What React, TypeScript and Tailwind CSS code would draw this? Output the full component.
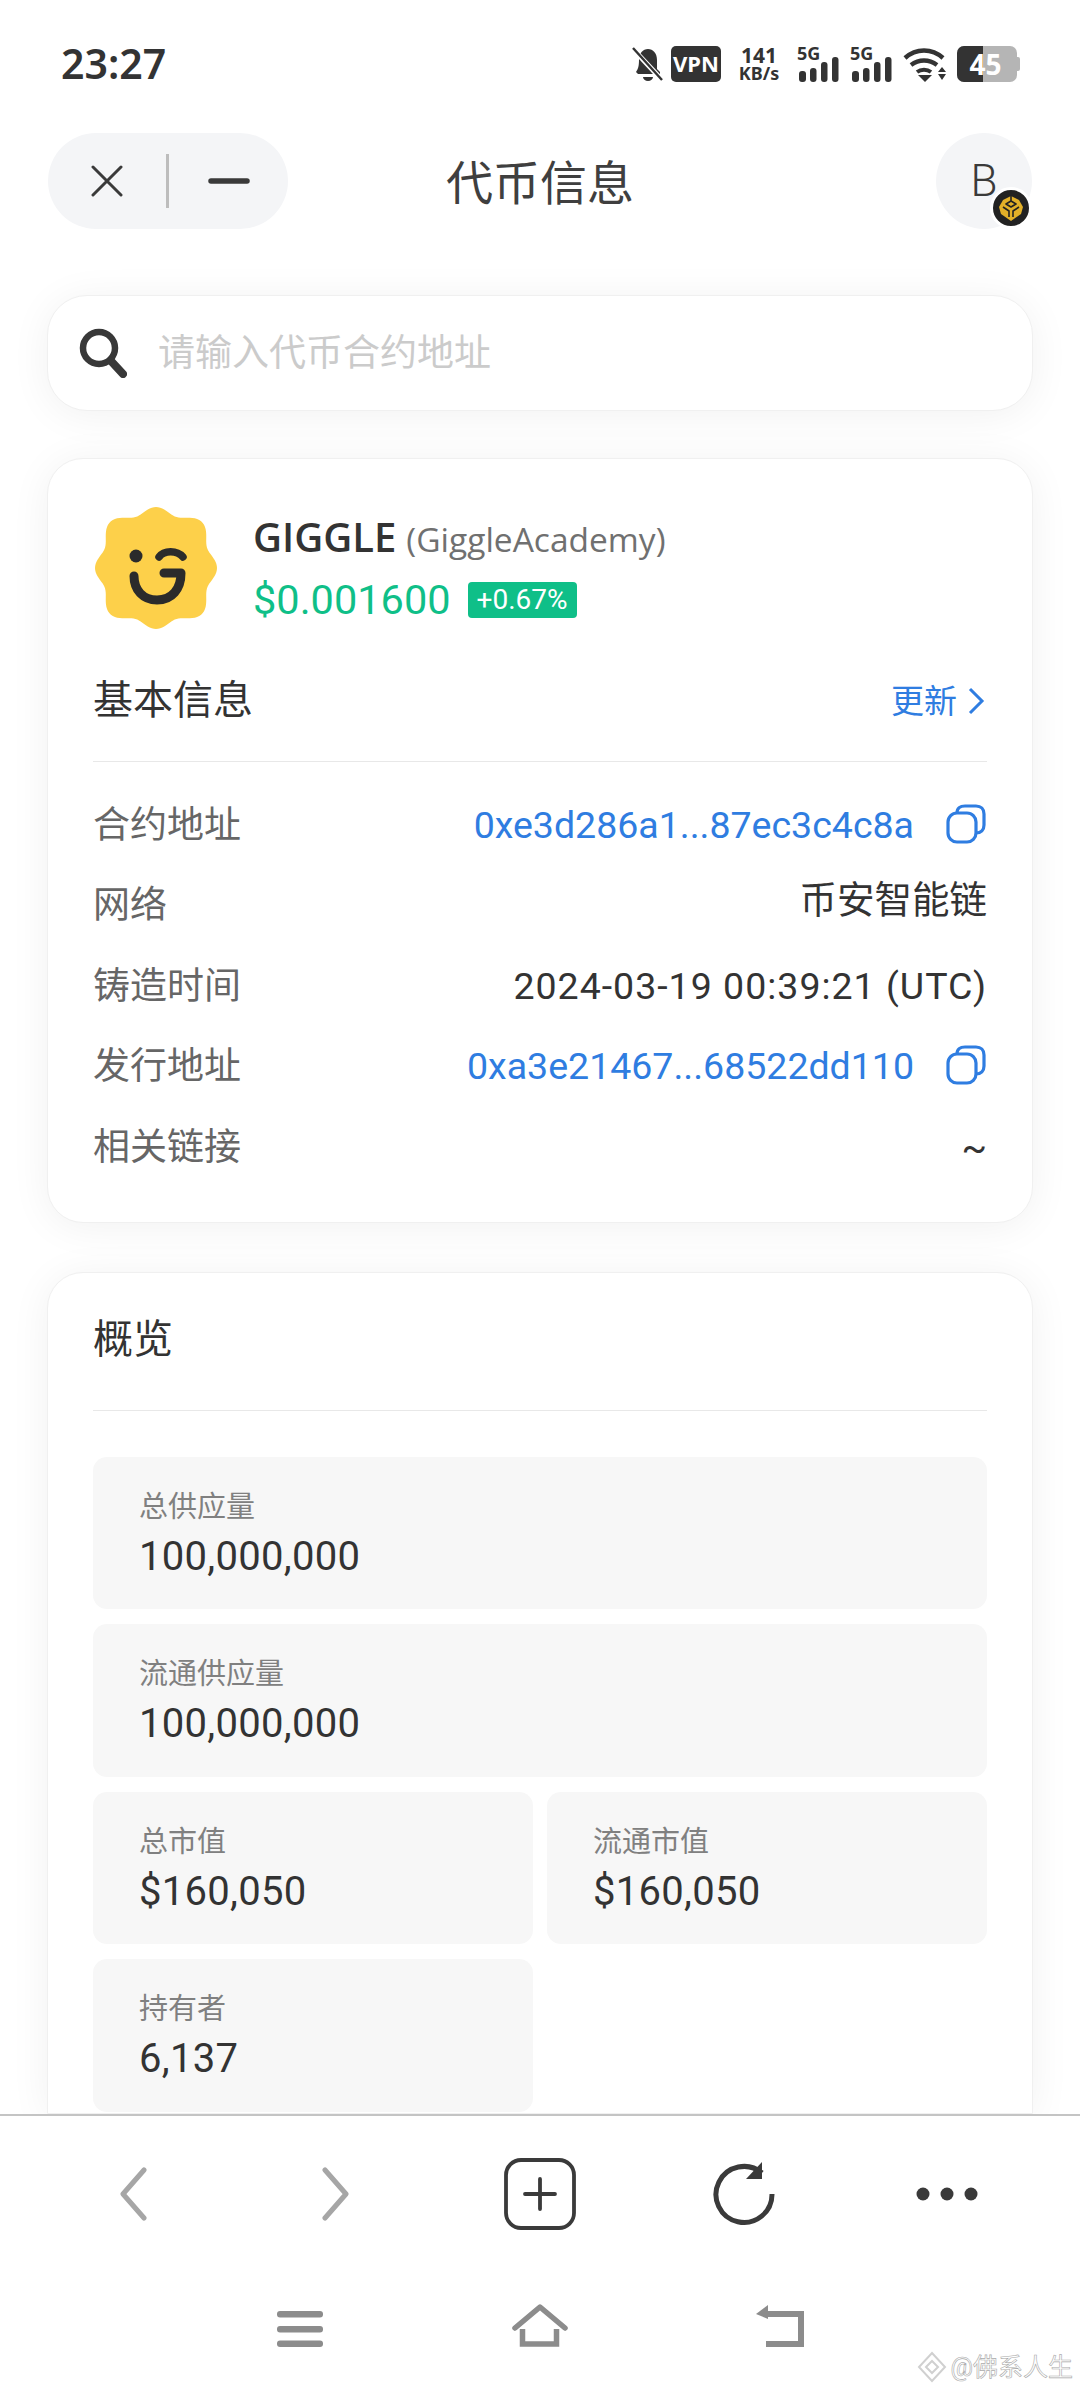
const sans = "font-['Roboto','Noto_Sans_CJK_SC',sans-serif]";
const cardShadow = "shadow-[0_4px_40px_rgba(0,0,0,0.06)]";

// scalloped badge outline of the token logo
const logoPath =
  Array.from({ length: 180 }, (_, i) => {
    const t = (i / 180) * Math.PI * 2;
    const r = 59 + 4 * Math.cos(8 * t) - 2 * Math.cos(4 * t);
    return `${i === 0 ? "M" : "L"}${(61 + r * Math.sin(t)).toFixed(2)} ${(61 - r * Math.cos(t)).toFixed(2)}`;
  }).join(" ") + "z";

function Signal() {
  return (
    <div className="flex h-[36px] w-[42px] flex-col items-start">
      <span className="text-[18px] font-bold leading-[14px] font-['Noto_Sans',sans-serif]">5G</span>
      <svg width="41" height="25" viewBox="0 0 41 25" className="-mt-[3px] ml-[1px]">
        <rect x="1" y="14" width="7" height="11" rx="3" fill="#333" />
        <rect x="12" y="11" width="6.500" height="14" rx="3" fill="#333" />
        <rect x="23" y="5" width="6.500" height="20" rx="3" fill="#333" />
        <rect x="34" y="0" width="6.500" height="25" rx="3" fill="#333" />
      </svg>
    </div>
  );
}

function StatusBar() {
  return (
    <div className="flex h-[128px] items-center justify-between pl-[61px] pr-[60px] pb-[1px]">
      <span className="text-[41px] font-semibold leading-none text-[#333] font-['Noto_Sans',sans-serif]">23:27</span>
      <div className="flex items-center text-[#333]">
        <svg width="32" height="38" viewBox="0 0 32 38" className="mr-[7px]">
          <path d="M4 27c2-3 3-6 3-12 0-7 4-11 9-11s9 4 9 11v9l3 3v2H6z" fill="#333" />
          <path d="M11 32h10a5 4 0 0 1-10 0z" fill="#333" />
          <path d="M1 4l29 31" stroke="#fff" strokeWidth="5" />
          <path d="M1 3l29 32" stroke="#333" strokeWidth="2.4" />
        </svg>
        <span className="mr-[17px] flex h-[36px] w-[50px] items-center justify-center rounded-[5px] bg-[#333] text-[22px] font-bold text-white font-['Noto_Sans',sans-serif]">VPN</span>
        <div className="mr-[17px] flex w-[42px] flex-col items-center font-['Noto_Sans',sans-serif] font-bold">
          <span className="text-[21px] leading-[19px]">141</span>
          <span className="text-[18px] leading-[17px]">KB/s</span>
        </div>
        <Signal />
        <span className="w-[11px]" />
        <Signal />
        <svg width="44" height="36" viewBox="0 0 44 36" className="ml-[11px]">
          <path d="M2 12c11-10 27-10 38 0" fill="none" stroke="#333" strokeWidth="4.4" />
          <path d="M8 19c8-6 18-6 26 0" fill="none" stroke="#333" strokeWidth="4.4" />
          <path d="M14 26c4-3 10-3 14 0" fill="none" stroke="#333" strokeWidth="4" />
          <path d="M15 29h14l-7 7z" fill="#333" />
          <path d="M35 26h8l-4-5zM35 28h8l-4 6z" fill="#333" />
        </svg>
        <div className="relative ml-[10px] flex h-[36px] w-[60px] overflow-hidden rounded-[7px] bg-[#b5b5b5]">
          <div className="h-full w-[26px] bg-[#333]" />
          <span className="absolute inset-0 flex items-center justify-center pr-[3px] text-[28px] font-bold text-white font-['Noto_Sans',sans-serif]">45</span>
        </div>
        <div className="h-[14px] w-[3px] rounded-r-[2px] bg-[#b5b5b5]" />
      </div>
    </div>
  );
}

function TitleBar() {
  return (
    <div className="relative flex h-[96px] items-center justify-between px-[48px]">
      <div className="flex h-[96px] w-[240px] items-center rounded-full bg-[#f4f5f7]">
        <svg width="32" height="32" viewBox="0 0 32 32" className="ml-[43px]">
          <path d="M2 2l28 28M30 2L2 30" stroke="#3a3a3a" strokeWidth="3" strokeLinecap="round" />
        </svg>
        <div className="ml-[43px] h-[54px] w-[3px] bg-[#bdbdbd]" />
        <svg width="42" height="6" viewBox="0 0 42 6" className="ml-[39px]">
          <path d="M3 3h36" stroke="#3a3a3a" strokeWidth="5.500" strokeLinecap="round" />
        </svg>
      </div>
      <span className="pointer-events-none absolute left-0 right-0 pt-[5px] text-center text-[47px] leading-none text-[#3f3f3f]">代币信息</span>
      <div className="relative flex h-[96px] w-[96px] items-center justify-center rounded-full bg-[#f4f5f7]">
        <span className="text-[44px] font-light leading-none text-[#3a3a3a]">B</span>
        <div className="absolute bottom-0 right-0 flex h-[42px] w-[42px] items-center justify-center rounded-full border-[3px] border-white bg-[#222]">
          <svg width="28" height="28" viewBox="0 0 28 28">
            <path d="M14 2l8 4 4 7-2 7-10 7-10-7-2-7 4-7z" fill="#e3b028" />
            <path d="M14 7l5 3-5 3-5-3zM6 13l6 4v6M22 13l-6 4v6M14 2v5" fill="none" stroke="#222" strokeWidth="1.6" strokeLinejoin="round" />
          </svg>
        </div>
      </div>
    </div>
  );
}

function Logo() {
  return (
    <svg width="122" height="122" viewBox="0 0 122 122" className="ml-[2px] shrink-0">
      <path fill="#fdd04a" d={logoPath} />
      <circle cx="41" cy="49" r="6.500" fill="#2b2b2b" />
      <path d="M64 50c5-7 18-7 24 0" fill="none" stroke="#2b2b2b" strokeWidth="7.500" strokeLinecap="round" />
      <path d="M39 69c0 14 9 24 23 24 15 0 24-11 24-27H69" fill="none" stroke="#2b2b2b" strokeWidth="9" strokeLinecap="round" strokeLinejoin="round" />
    </svg>
  );
}

function CopyIcon() {
  return (
    <svg width="40" height="40" viewBox="0 0 40 40" fill="none" stroke="#2f7de1" strokeWidth="3.2" className="ml-[32px] mr-[1px] -mt-[3px]">
      <rect x="2" y="9" width="28" height="29" rx="9" />
      <path d="M11 9c0-5 3-7 8-7h11c5 0 8 3 8 8v11c0 5-3 8-8 8" />
    </svg>
  );
}

function InfoRow({ label, children }: { label: string; children: React.ReactNode }) {
  return (
    <div className="flex h-[80.500px] items-center justify-between">
      <span className="text-[37px] leading-none text-[#666]">{label}</span>
      <div className="flex items-center text-[37.500px] leading-none text-[#333]">{children}</div>
    </div>
  );
}

function Stat({ label, value }: { label: string; value: string }) {
  return (
    <div className="flex h-[152.500px] flex-col rounded-[14px] bg-[#f7f7f7] pl-[46px] pt-[33px]">
      <span className="text-[29px] leading-[34px] text-[#808080]">{label}</span>
      <span className="mt-[11px] text-[40px] leading-[44px] tracking-[0.3px] text-[#333]">{value}</span>
    </div>
  );
}

export default function App() {
  return (
    <div className={`relative flex h-[2392px] w-[1080px] flex-col overflow-hidden bg-white ${sans}`}>
      <StatusBar />
      <div className="mt-[5px]">
        <TitleBar />
      </div>

      <main className="flex min-h-0 flex-1 flex-col overflow-hidden bg-white px-[47px] pt-[66px]">
        <div className={`flex h-[116px] shrink-0 items-center rounded-[40px] border border-[#f0f0f0] bg-white pl-[31px] ${cardShadow}`}>
          <svg width="48" height="50" viewBox="0 0 48 50" fill="none" stroke="#383838">
            <circle cx="20" cy="20" r="16" strokeWidth="6.500" />
            <path d="M32 33l12 13" strokeWidth="8" strokeLinecap="round" />
          </svg>
          <span className="ml-[31px] text-[37px] leading-none text-[#cbcbcb]">请输入代币合约地址</span>
        </div>

        <section className={`mt-[47px] shrink-0 rounded-[36px] border border-[#f0f0f0] bg-white px-[45px] pb-[34px] pt-[48px] ${cardShadow}`}>
          <div className="flex items-start">
            <Logo />
            <div className="ml-[36px] pt-[5px]">
              <div className="flex items-baseline">
                <span className="text-[40px] font-semibold leading-[50px] text-[#333] font-['Open_Sans',sans-serif]">GIGGLE</span>
                <span className="ml-[10px] text-[33.500px] font-medium leading-[50px] text-[#707070] font-['Open_Sans',sans-serif]">(GiggleAcademy)</span>
              </div>
              <div className="mt-[12px] flex items-center">
                <span className="text-[41.500px] leading-[48px] text-[#0fbf88]">$0.001600</span>
                <span className="ml-[17px] flex h-[36px] w-[109px] items-center justify-center rounded-[4px] bg-[#0fbf88] text-[28px] leading-none text-white">+0.67%</span>
              </div>
            </div>
          </div>

          <div className="mt-[23px] flex h-[110px] items-center justify-between border-b border-[#e8e8e8] pb-[11px]">
            <span className="text-[40px] leading-none text-[#333]">基本信息</span>
            <span className="mr-[2px] flex items-center text-[33px] leading-none text-[#2f7de1]">
              更新
              <svg width="18" height="28" viewBox="0 0 18 28" fill="none" stroke="#2f7de1" strokeWidth="3" className="ml-[10px]">
                <path d="M3 2l12 12L3 26" />
              </svg>
            </span>
          </div>

          <div className="pt-[23px]">
            <InfoRow label="合约地址">
              <span className="text-[#2f7de1]">0xe3d286a1...87ec3c4c8a</span>
              <CopyIcon />
            </InfoRow>
            <InfoRow label="网络">
              <span className="-mt-[10px]">币安智能链</span>
            </InfoRow>
            <InfoRow label="铸造时间">
              <span className="tracking-[1px]">2024-03-19 00:39:21 (UTC)</span>
            </InfoRow>
            <InfoRow label="发行地址">
              <span className="text-[#2f7de1]">0xa3e21467...68522dd110</span>
              <CopyIcon />
            </InfoRow>
            <InfoRow label="相关链接">
              <span>~</span>
            </InfoRow>
          </div>
        </section>

        <section className={`mt-[49px] flex-1 rounded-t-[36px] border border-[#f0f0f0] bg-white px-[45px] pt-[45px] ${cardShadow}`}>
          <div className="flex h-[93px] items-start border-b border-[#e8e8e8]">
            <span className="text-[40px] leading-[44px] text-[#333]">概览</span>
          </div>
          <div className="mt-[46px] grid grid-cols-2 gap-x-[14px] gap-y-[15px]">
            <div className="col-span-2">
              <Stat label="总供应量" value="100,000,000" />
            </div>
            <div className="col-span-2">
              <Stat label="流通供应量" value="100,000,000" />
            </div>
            <Stat label="总市值" value="$160,050" />
            <Stat label="流通市值" value="$160,050" />
            <Stat label="持有者" value="6,137" />
          </div>
        </section>
      </main>

      <nav className="z-10 grid h-[158px] shrink-0 grid-cols-5 items-center justify-items-center border-t-2 border-[#c4c4c4] bg-white px-[31px]">
        <svg width="30" height="54" viewBox="0 0 30 54" fill="none" stroke="#a6a6a6" strokeWidth="5" strokeLinecap="round" strokeLinejoin="round">
          <path d="M26 3L5 27l21 24" />
        </svg>
        <svg width="30" height="54" viewBox="0 0 30 54" fill="none" stroke="#a6a6a6" strokeWidth="5" strokeLinecap="round" strokeLinejoin="round">
          <path d="M4 3l21 24L4 51" />
        </svg>
        <svg width="72" height="72" viewBox="0 0 72 72" fill="none" stroke="#3a3a3a">
          <rect x="2" y="2" width="68" height="68" rx="15" strokeWidth="3.800" />
          <path d="M36 21v30M21 36h30" strokeWidth="3.800" strokeLinecap="round" />
        </svg>
        <svg width="64" height="64" viewBox="0 0 64 64" fill="none" stroke="#3a3a3a">
          <path d="M50 11A28 28 0 1 0 60 32" strokeWidth="5" />
          <path d="M50 0v17H34z" fill="#3a3a3a" stroke="none" />
        </svg>
        <svg width="62" height="14" viewBox="0 0 62 14" fill="#3a3a3a">
          <circle cx="7" cy="7" r="6.500" />
          <circle cx="31" cy="7" r="6.500" />
          <circle cx="55" cy="7" r="6.500" />
        </svg>
      </nav>

      <div className="relative flex h-[120px] shrink-0 items-end justify-center bg-white pb-[45px]">
        <div className="grid w-[720px] grid-cols-3 items-end justify-items-center">
          <svg width="46" height="36" viewBox="0 0 46 36" fill="#8c8c8c">
            <rect x="0" y="0" width="46" height="6.500" rx="3" />
            <rect x="0" y="15" width="46" height="6.500" rx="3" />
            <rect x="0" y="29.500" width="46" height="6.500" rx="3" />
          </svg>
          <svg width="56" height="43" viewBox="0 0 56 43" fill="none" stroke="#8c8c8c" strokeWidth="5.500">
            <path d="M3 24L28 3l25 21" strokeLinecap="round" strokeLinejoin="round" />
            <path d="M10.500 25v15h34V25" />
          </svg>
          <svg width="48" height="42" viewBox="0 0 48 42" fill="none" stroke="#8c8c8c" strokeWidth="6">
            <path d="M8 9h37v30H10" />
            <path d="M12 0L0 9l12 5z" fill="#8c8c8c" stroke="none" />
          </svg>
        </div>
        <div className="absolute bottom-[9px] right-[7px] flex items-center text-[25px] leading-none text-white [-webkit-text-stroke:0.6px_#aaaaaa]">
          <svg width="30" height="32" viewBox="0 0 30 32" fill="none" stroke="#d0d0d0" strokeWidth="2" className="mr-[4px]">
            <path d="M15 2l13 14-13 14L2 16z" />
            <path d="M15 10l6 6-6 6-6-6z" />
          </svg>
          @佛系人生
        </div>
      </div>
    </div>
  );
}
